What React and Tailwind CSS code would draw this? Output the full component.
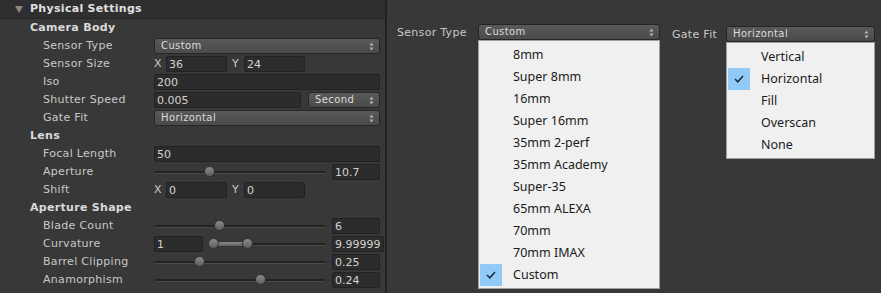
import React from 'react';

const UI = { fontFamily: '"DejaVu Sans", "Liberation Sans", sans-serif' };
const MENU = { fontFamily: '"Noto Sans", "Open Sans", sans-serif' };

const sensorTypes = ['8mm', 'Super 8mm', '16mm', 'Super 16mm', '35mm 2-perf', '35mm Academy', 'Super-35', '65mm ALEXA', '70mm', '70mm IMAX', 'Custom'];
const gateFits = ['Vertical', 'Horizontal', 'Fill', 'Overscan', 'None'];

function Arrows() {
  return (
    <svg width="5" height="9" viewBox="0 0 5 9" className="shrink-0">
      <path d="M2.5 0.5 L4.5 3.5 L0.5 3.5 Z" fill="#b4b4b4" />
      <path d="M2.5 8.5 L4.5 5.5 L0.5 5.5 Z" fill="#b4b4b4" />
    </svg>
  );
}

function Dropdown({ value, className = '' }) {
  return (
    <div className={`h-[16px] flex items-center justify-between pl-[6px] pr-[5px] rounded-[3px] border border-[#262626] bg-gradient-to-b from-[#5a5a5a] to-[#4a4a4a] text-[10px] text-[#dcdcdc] ${className}`}>
      <span className="leading-none tracking-[0.4px]">{value}</span>
      <Arrows />
    </div>
  );
}

function Field({ value, className = '' }) {
  return (
    <div className={`h-[16px] flex items-center px-[2px] rounded-[2px] border border-[#222] bg-[#2c2c2c] text-[11px] text-[#d2d2d2] overflow-visible whitespace-nowrap ${className}`}>
      <span className="leading-none">{value}</span>
    </div>
  );
}

function Knob({ left }) {
  return (
    <div
      className="absolute top-[2px] w-[11px] h-[11px] rounded-full bg-gradient-to-b from-[#8a8a8a] to-[#5e5e5e] border border-[#333]"
      style={{ left }}
    />
  );
}

function Track({ knob, className = '' }) {
  return (
    <div className={`relative h-[16px] flex items-center ${className}`}>
      <div className="w-full h-[3px] rounded-full bg-[#232323] border-b border-[#4a4a4a]" />
      <Knob left={knob - 5} />
    </div>
  );
}

function Row({ label, bold, children }) {
  return (
    <div className="flex h-[18px] items-center">
      <div
        className={`${bold ? 'pl-[30px] font-bold text-[#dadada]' : 'pl-[43px] text-[#c8c8c8]'} w-[154px] shrink-0 text-[11px] tracking-[0.3px] whitespace-nowrap`}
      >
        {label}
      </div>
      <div className="flex-1 flex items-center gap-[6px] pr-[5px]">{children}</div>
    </div>
  );
}

function XY({ x, y }) {
  return (
    <div className="flex items-center text-[11px] text-[#c8c8c8]">
      <span className="w-[12px]">X</span>
      <Field value={x} className="w-[61px]" />
      <span className="w-[12px] ml-[5px]">Y</span>
      <Field value={y} className="w-[61px]" />
    </div>
  );
}

function Popup({ items, selected, width }) {
  return (
    <div
      className="absolute left-0 top-full bg-[#f0f0f0] border border-[#a0a0a0] pt-[3px] pb-[2px] pl-[1px]"
      style={{ ...MENU, width }}
    >
      {items.map((it) => (
        <div key={it} className="h-[22px] flex items-center">
          <div className={`w-[22px] h-[22px] flex items-center justify-center ${it === selected ? 'bg-[#91c9f7]' : ''}`}>
            {it === selected && (
              <svg width="10" height="8" viewBox="0 0 10 8">
                <path d="M1 4 L3.8 6.8 L9 1" fill="none" stroke="#1b2a3c" strokeWidth="1.5" />
              </svg>
            )}
          </div>
          <span className="ml-[11px] text-[12.5px] text-[#1a1a1a] leading-none">{it}</span>
        </div>
      ))}
    </div>
  );
}

export default function App() {
  return (
    <div className="w-[881px] h-[293px] flex bg-[#383838] overflow-hidden" style={UI}>
      {/* Inspector */}
      <div className="w-[387px] shrink-0 bg-[#383838] border-r-2 border-[#222]">
        <div className="h-[19px] flex items-center bg-[#2f2f2f] border-b border-[#262626] pr-[5px]">
          <svg width="8" height="7" viewBox="0 0 8 7" className="ml-[15px]">
            <path d="M0 0 L8 0 L4 7 Z" fill="#8a8a8a" />
          </svg>
          <span className="ml-[7px] text-[11px] font-bold text-[#e0e0e0] tracking-[0.3px]">Physical Settings</span>
        </div>

        <Row label="Camera Body" bold />
        <Row label="Sensor Type"><Dropdown value="Custom" className="flex-1" /></Row>
        <Row label="Sensor Size"><XY x="36" y="24" /></Row>
        <Row label="Iso"><Field value="200" className="flex-1" /></Row>
        <Row label="Shutter Speed">
          <Field value="0.005" className="w-[147px]" />
          <Dropdown value="Second" className="ml-[1px] flex-1" />
        </Row>
        <Row label="Gate Fit"><Dropdown value="Horizontal" className="flex-1" /></Row>

        <Row label="Lens" bold />
        <Row label="Focal Length"><Field value="50" className="flex-1" /></Row>
        <Row label="Aperture">
          <Track knob={55} className="w-[172px]" />
          <Field value="10.7" className="flex-1" />
        </Row>
        <Row label="Shift"><XY x="0" y="0" /></Row>

        <Row label="Aperture Shape" bold />
        <Row label="Blade Count">
          <Track knob={65} className="w-[172px]" />
          <Field value="6" className="flex-1" />
        </Row>
        <Row label="Curvature">
          <Field value="1" className="w-[49px]" />
          <div className="relative w-[117px] h-[16px] flex items-center">
            <div className="w-full h-[3px] rounded-full bg-[#232323] border-b border-[#4a4a4a]" />
            <div className="absolute left-[4px] top-[5px] w-[35px] h-[6px] bg-gradient-to-b from-[#8a8a8a] to-[#5e5e5e] border-y border-[#333]" />
            <Knob left={-1} />
            <Knob left={33} />
          </div>
          <Field value="9.99999" className="flex-1" />
        </Row>
        <Row label="Barrel Clipping">
          <Track knob={45} className="w-[172px]" />
          <Field value="0.25" className="flex-1" />
        </Row>
        <Row label="Anamorphism">
          <Track knob={106} className="w-[172px]" />
          <Field value="0.24" className="flex-1" />
        </Row>
      </div>

      {/* Open popups */}
      <div className="flex-1 flex items-start pt-[24px] pl-[10px]">
        <span className="text-[11px] text-[#c8c8c8] tracking-[0.3px] mt-[1px] w-[81px]">Sensor Type</span>
        <div className="relative w-[182px]">
          <Dropdown value="Custom" />
          <Popup items={sensorTypes} selected="Custom" width={182} />
        </div>
        <div className="flex items-start mt-[2px] ml-[12px]">
          <span className="text-[11px] text-[#c8c8c8] tracking-[0.3px] mt-[1px] w-[54px]">Gate Fit</span>
          <div className="relative w-[149px]">
            <Dropdown value="Horizontal" />
            <Popup items={gateFits} selected="Horizontal" width={149} />
          </div>
        </div>
      </div>
    </div>
  );
}
